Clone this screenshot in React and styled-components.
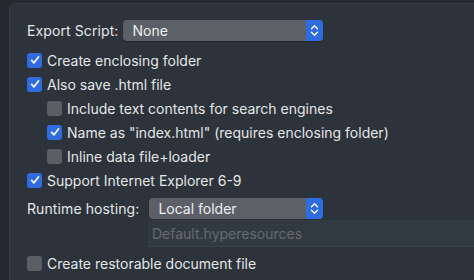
import styled, { createGlobalStyle } from "styled-components"

const Global = createGlobalStyle`
    html, body {
        margin: 0;
        padding: 0;
        background: #232a30;
    }
    body {
        font-family: Inter, "Noto Sans", "Liberation Sans", sans-serif;
        -webkit-font-smoothing: antialiased;
    }
`

function Check({ checked }) {
    return (
        <Box checked={checked}>
            {checked && (
                <svg width="10" height="10" viewBox="0 0 10 10">
                    <path d="M1.6 5.3 L4 7.8 L8.5 1.9" fill="none" stroke="#fff" strokeWidth="1.7" strokeLinecap="round" strokeLinejoin="round" />
                </svg>
            )}
        </Box>
    )
}

function Option({ checked, indent, children }) {
    return (
        <Row indent={indent}>
            <Check checked={checked} />
            <span>{children}</span>
        </Row>
    )
}

function Popup({ value, width }) {
    return (
        <Select width={width}>
            <span>{value}</span>
            <Stepper>
                <svg width="9" height="13" viewBox="0 0 9 13">
                    <path d="M1.5 4.8 L4.5 1.8 L7.5 4.8 M1.5 8.2 L4.5 11.2 L7.5 8.2" fill="none" stroke="#fff" strokeWidth="1.4" strokeLinecap="round" strokeLinejoin="round" />
                </svg>
            </Stepper>
        </Select>
    )
}

export default function App() {
    return (
        <>
            <Global />
            <Frame>
                <Panel>
                    <FieldRow>
                        <Label>Export Script:</Label>
                        <Popup value="None" width={200} />
                    </FieldRow>
                    <Options>
                        <Option checked>Create enclosing folder</Option>
                        <Option checked>Also save .html file</Option>
                        <Option indent>Include text contents for search engines</Option>
                        <Option checked indent>Name as "index.html" (requires enclosing folder)</Option>
                        <Option indent>Inline data file+loader</Option>
                        <Option checked>Support Internet Explorer 6-9</Option>
                    </Options>
                    <HostingRow>
                        <Label>Runtime hosting:</Label>
                        <Popup value="Local folder" width={174} />
                    </HostingRow>
                    <PathField>Default.hyperesources</PathField>
                    <Bottom>
                        <Option>Create restorable document file</Option>
                    </Bottom>
                </Panel>
            </Frame>
        </>
    )
}

const Frame = styled.div`
    width: 474px;
    height: 280px;
    padding: 3px 0 0 9px;
    box-sizing: border-box;
    background: #232a30;
    overflow: hidden;
    display: flex;
`

const Panel = styled.div`
    flex: 1;
    background: #2c333a;
    border-top-left-radius: 6px;
    border-left: 1px solid #343b42;
    border-top: 1px solid #343b42;
    padding: 16px 0 0 17px;
    color: #e4e6e8;
    font-size: 14px;
    display: flex;
    flex-direction: column;
`

const FieldRow = styled.div`
    display: flex;
    align-items: center;
    gap: 5px;
    height: 21px;
`

const HostingRow = styled(FieldRow)`
    margin-top: 6px;
    gap: 10px;
`

const Label = styled.span`
    letter-spacing: 0.1px;
`

const Select = styled.div`
    width: ${p => p.width}px;
    height: 21px;
    box-sizing: border-box;
    background: #5b6066;
    border-radius: 4px;
    display: flex;
    align-items: center;
    justify-content: space-between;
    padding-left: 9px;
    overflow: hidden;
    color: #eceef0;
    box-shadow: 0 1px 1px rgba(0, 0, 0, 0.25);
`

const Stepper = styled.div`
    width: 17px;
    height: 100%;
    background: #2f6ce0;
    display: flex;
    align-items: center;
    justify-content: center;
`

const Options = styled.div`
    display: flex;
    flex-direction: column;
    margin-top: 7px;
`

const Row = styled.div`
    display: flex;
    align-items: center;
    gap: 5px;
    height: 24px;
    padding-left: ${p => (p.indent ? 20 : 0)}px;
`

const Box = styled.div`
    width: 15px;
    height: 15px;
    box-sizing: border-box;
    border-radius: 3px;
    background: ${p => (p.checked ? "#2f6ce0" : "#5a5f64")};
    display: flex;
    align-items: center;
    justify-content: center;
    flex-shrink: 0;
`

const PathField = styled.div`
    margin: 0 0 0 121px;
    height: 28px;
    box-sizing: border-box;
    background: #323a41;
    border-top: 1px solid #2a3037;
    border-bottom: 1px solid #3b434a;
    display: flex;
    align-items: center;
    padding-left: 4px;
    color: #646b72;
`

const Bottom = styled.div`
    margin-top: 4px;
`
